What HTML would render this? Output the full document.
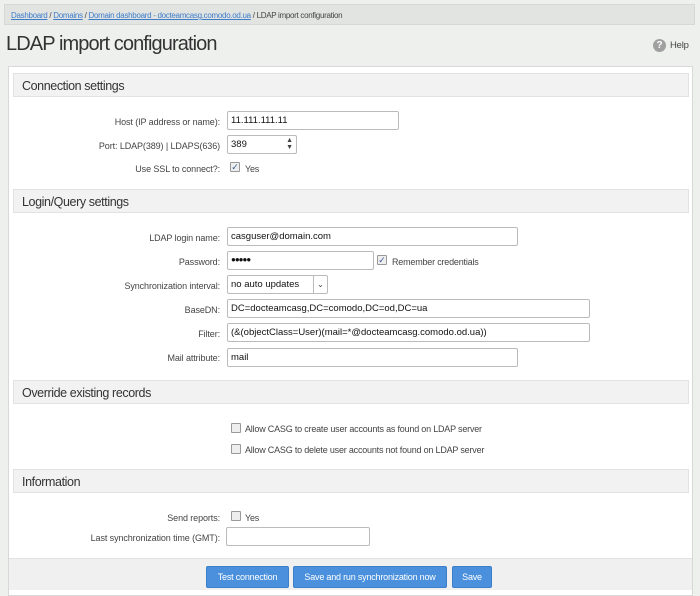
<!DOCTYPE html>
<html><head><meta charset="utf-8"><style>
*{box-sizing:border-box;margin:0;padding:0}
body{width:700px;height:590px;overflow:hidden;background:#eef0ee;font-family:"Liberation Sans",sans-serif;color:#333;position:relative}
.a{position:absolute}
.bc{left:4px;top:4px;width:691px;height:21px;background:#e2e4e2;border:1px solid #d6d8d6;font-size:8px;padding:6px 6px;color:#444;letter-spacing:-0.3px}
.bc u{color:#3d7cc9}
.title{left:6px;top:33px;font-size:20px;color:#333;letter-spacing:-0.9px}
.panel{left:8px;top:66px;width:685px;height:530px;background:#fff;border:1px solid #d8d8d8}
.hd{left:13px;width:676px;height:24px;background:#f2f2f2;border:1px solid #e2e2e2;font-size:12.5px;padding:5px 8px;color:#333;letter-spacing:-0.4px}
.lb{right:480px;font-size:9px;color:#444;text-align:right;white-space:nowrap;letter-spacing:-0.1px}
.in{border:1px solid #bbb;border-radius:2px;background:#fff;font-size:9.5px;padding:3px 3px;color:#111;height:19px;white-space:nowrap}
.cb{width:10px;height:10px;border:1px solid #999;background:#eee;border-radius:1px;font-size:9px;line-height:8px;text-align:center;color:#3a5a9a}
.t{font-size:9px;color:#444;white-space:nowrap;letter-spacing:-0.2px}
.ft{left:9px;top:558px;width:683px;height:32px;background:#f0f0f0;border-top:1px solid #e2e2e2}
.btn{top:566px;height:22px;background:#4a90dc;border:1px solid #3a7fc8;border-radius:2px;color:#fff;font-size:9px;text-align:center;line-height:20px;letter-spacing:-0.2px;white-space:nowrap}
</style></head><body>
<div class="a bc"><u>Dashboard</u> / <u>Domains</u> / <u>Domain dashboard - docteamcasg.comodo.od.ua</u> / LDAP import configuration</div>
<div class="a title">LDAP import configuration</div>
<div class="a" style="left:653px;top:39px;width:13px;height:13px;border-radius:50%;background:#a0a0a0;color:#fff;font-size:10px;font-weight:bold;text-align:center;line-height:13px">?</div>
<div class="a t" style="left:670px;top:40px;font-size:9.5px">Help</div>
<div class="a panel"></div>

<div class="a hd" style="top:73px">Connection settings</div>
<div class="a lb" style="top:117px">Host (IP address or name):</div>
<div class="a in" style="left:227px;top:111px;width:172px">11.111.111.11</div>
<div class="a lb" style="top:141px">Port: LDAP(389) | LDAPS(636)</div>
<div class="a in" style="left:227px;top:135px;width:70px">389<span style="position:absolute;right:3px;top:1px;font-size:7px;line-height:7px;color:#444">&#9650;<br>&#9660;</span></div>
<div class="a lb" style="top:164px">Use SSL to connect?:</div>
<div class="a cb" style="left:230px;top:162px">&#10003;</div>
<div class="a t" style="left:245px;top:164px">Yes</div>

<div class="a hd" style="top:189px">Login/Query settings</div>
<div class="a lb" style="top:233px">LDAP login name:</div>
<div class="a in" style="left:227px;top:227px;width:291px">casguser@domain.com</div>
<div class="a lb" style="top:257px">Password:</div>
<div class="a in" style="left:227px;top:251px;width:147px;font-size:8px;letter-spacing:-1px">●●●●●</div>
<div class="a cb" style="left:377px;top:255px">&#10003;</div>
<div class="a t" style="left:392px;top:257px">Remember credentials</div>
<div class="a lb" style="top:281px">Synchronization interval:</div>
<div class="a in" style="left:227px;top:275px;width:101px">no auto updates<span style="position:absolute;right:0;top:0;width:14px;height:17px;border-left:1px solid #bbb;font-size:8px;text-align:center;line-height:17px;color:#444">&#8964;</span></div>
<div class="a lb" style="top:305px">BaseDN:</div>
<div class="a in" style="left:227px;top:299px;width:363px">DC=docteamcasg,DC=comodo,DC=od,DC=ua</div>
<div class="a lb" style="top:329px">Filter:</div>
<div class="a in" style="left:227px;top:323px;width:363px">(&amp;(objectClass=User)(mail=*@docteamcasg.comodo.od.ua))</div>
<div class="a lb" style="top:353px">Mail attribute:</div>
<div class="a in" style="left:227px;top:348px;width:291px">mail</div>

<div class="a hd" style="top:380px">Override existing records</div>
<div class="a cb" style="left:231px;top:423px"></div>
<div class="a t" style="left:245px;top:424px">Allow CASG to create user accounts as found on LDAP server</div>
<div class="a cb" style="left:231px;top:444px"></div>
<div class="a t" style="left:245px;top:445px">Allow CASG to delete user accounts not found on LDAP server</div>

<div class="a hd" style="top:469px">Information</div>
<div class="a lb" style="top:513px">Send reports:</div>
<div class="a cb" style="left:231px;top:511px"></div>
<div class="a t" style="left:245px;top:513px">Yes</div>
<div class="a lb" style="top:533px">Last synchronization time (GMT):</div>
<div class="a in" style="left:226px;top:527px;width:144px"></div>

<div class="a ft"></div>
<div class="a btn" style="left:206px;width:83px">Test connection</div>
<div class="a btn" style="left:293px;width:154px">Save and run synchronization now</div>
<div class="a btn" style="left:452px;width:40px">Save</div>
</body></html>
